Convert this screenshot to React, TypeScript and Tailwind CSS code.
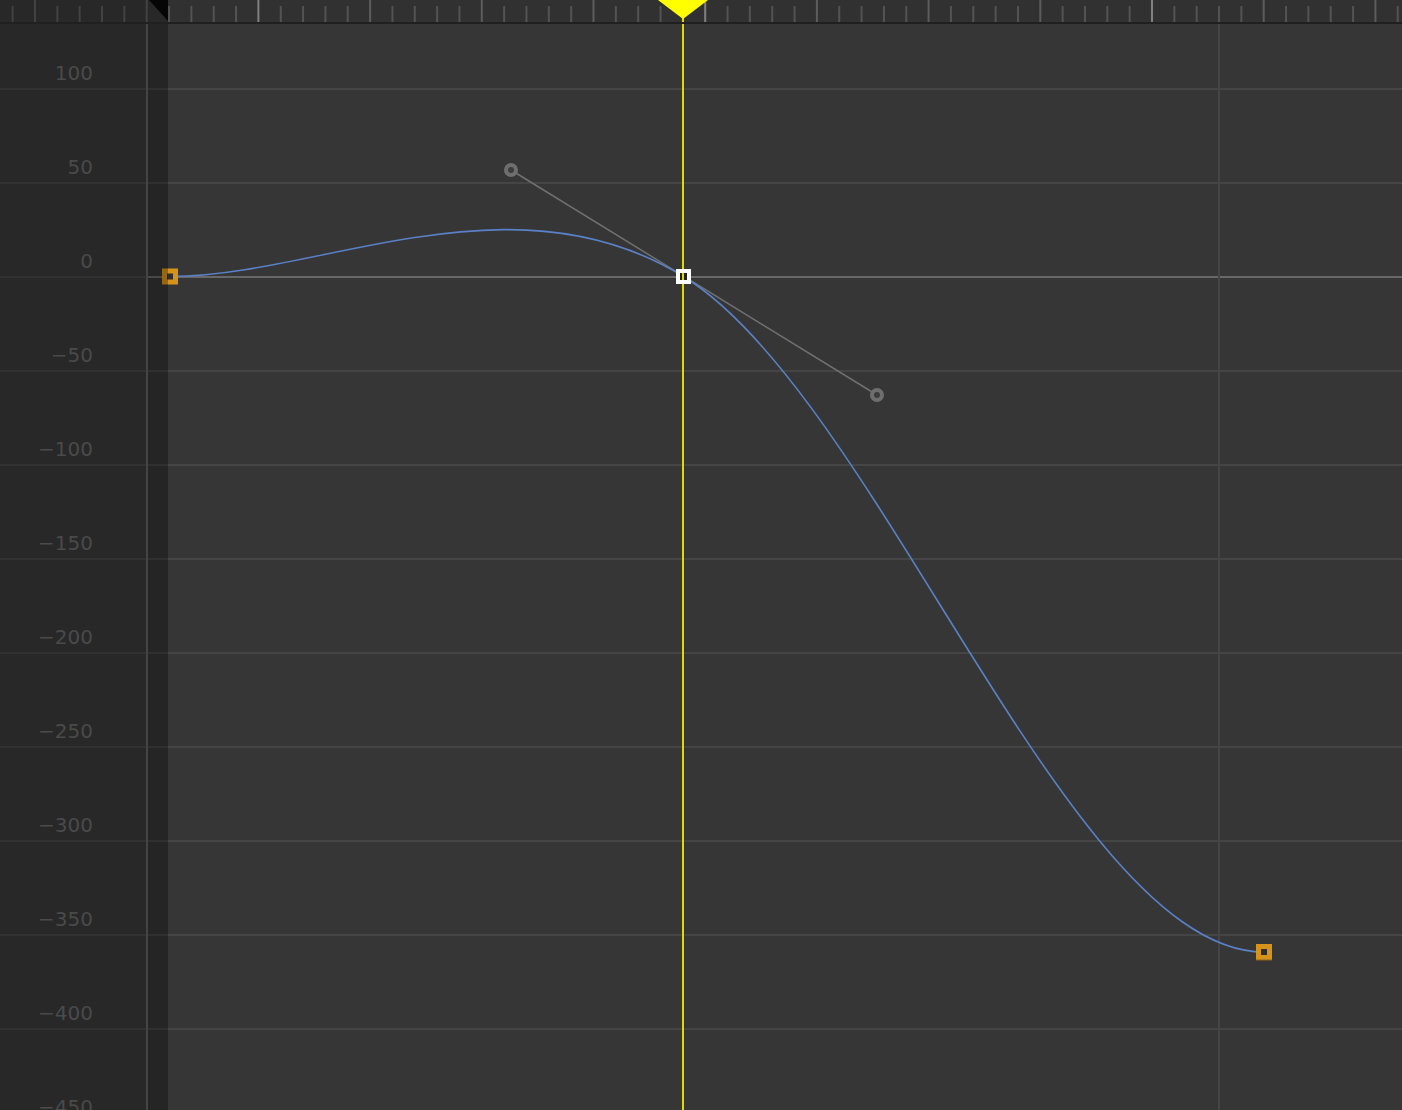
import React from "react";

// value axis labels, one per grid row (94px apart)
const LABELS = ["100", "50", "0", "−50", "−100", "−150", "−200", "−250", "−300", "−350", "−400", "−450"];

const TICK0 = 12.66;
const TICK_STEP = 22.34;
const PLAYHEAD_X = 683;

const Ruler: React.FC = () => {
  const ticks = Array.from({ length: 63 }, (_, k) => k);
  return (
    <div className="h-[24px] shrink-0 border-b-2 border-[#202020]">
      <svg width={1402} height={22} className="block">
        <rect x={0} y={0} width={168} height={22} fill="#282828" />
        <rect x={168} y={0} width={1234} height={22} fill="#313131" />
        {ticks.map((k) => {
          const x = TICK0 + TICK_STEP * k;
          const major = (k - 1) % 5 === 0;
          const bright = (k - 11) % 20 === 0;
          const left = x < 160;
          const color = left ? "#424242" : bright ? "#808080" : major ? "#5c5c5c" : "#535353";
          return (
            <line key={k} x1={x} x2={x} y1={major ? 0 : 6} y2={22} stroke={color} strokeWidth={2} />
          );
        })}
        <polygon points="149,0 168,0 168,21" fill="#050505" />
        <line x1={PLAYHEAD_X} x2={PLAYHEAD_X} y1={14} y2={22} stroke="#dede00" strokeWidth={2} />
        <polygon points="658,0 708,0 683,19" fill="#ffff00" />
      </svg>
    </div>
  );
};

const Gutter: React.FC = () => (
  <div className="w-[146px] shrink-0 flex flex-col overflow-hidden bg-[#282828]">
    {LABELS.map((label, i) => (
      <div
        key={label}
        className={`${i === 0 ? "h-[66px]" : "h-[94px]"} shrink-0 border-b-2 border-[#323232] flex items-end justify-end pr-[53px] pb-[5px]`}
      >
        <span className="text-[20px] leading-[20px] text-[#4a4a4a]">{label}</span>
      </div>
    ))}
  </div>
);

// everything inside the graph is drawn in graph coords (page x - 148, page y - 24)
const Graph: React.FC = () => {
  const W = 1254;
  const H = 1086;
  const px = PLAYHEAD_X - 148;
  return (
    <div className="flex-1 min-w-0 overflow-hidden">
      <svg width={W} height={H} className="block">
        <rect x={0} y={0} width={W} height={H} fill="#363636" />
        {Array.from({ length: 11 }, (_, i) => (
          <line
            key={i}
            x1={0}
            x2={W}
            y1={65 + 94 * i}
            y2={65 + 94 * i}
            stroke={i === 2 ? "#686868" : "#454545"}
            strokeWidth={2}
          />
        ))}
        <line x1={1071} x2={1071} y1={0} y2={H} stroke="#454545" strokeWidth={2} />

        {/* tangent handles of the selected key */}
        <line x1={363} y1={146} x2={729} y2={371} stroke="#707070" strokeWidth={1.5} />

        <path
          d="M 22 252.5 C 172 252.5, 364 147, 535.5 252.5 C 729 371, 922 928, 1116 928"
          fill="none"
          stroke="#5a80c6"
          strokeWidth={1.6}
        />

        <circle cx={363} cy={146} r={5} fill="#3c3c3c" stroke="#6e6e6e" strokeWidth={4} />
        <circle cx={729} cy={371} r={5} fill="#3c3c3c" stroke="#6e6e6e" strokeWidth={4} />

        {/* start / end keys */}
        <rect x={16.5} y={247} width={11} height={11} fill="#2e2e2e" stroke="#d6931c" strokeWidth={5} />
        <rect x={1110.5} y={922.5} width={11} height={11} fill="#2e2e2e" stroke="#d6931c" strokeWidth={5} />
        <line x1={1108} x2={1124} y1={936} y2={936} stroke="#8c5f12" strokeWidth={1} />

        {/* darker strip along the left edge */}
        <rect x={0} y={0} width={20} height={H} fill="#000" opacity={0.3} />

        {/* playhead and the selected key on it */}
        <rect x={px - 4} y={248.5} width={8} height={8} fill="#222222" />
        <line x1={px} x2={px} y1={0} y2={H} stroke="#dcdc00" strokeWidth={2} />
        <rect x={px - 5} y={247} width={11} height={11} fill="none" stroke="#ffffff" strokeWidth={4} />
      </svg>
    </div>
  );
};

const App: React.FC = () => {
  return (
    <div className="w-[1402px] h-[1110px] overflow-hidden flex flex-col bg-[#282828] font-['DejaVu_Sans',sans-serif]">
      <Ruler />
      <div className="flex flex-1 min-h-0">
        <Gutter />
        <div className="w-[2px] shrink-0 bg-[#444444]" />
        <Graph />
      </div>
    </div>
  );
};

export default App;
